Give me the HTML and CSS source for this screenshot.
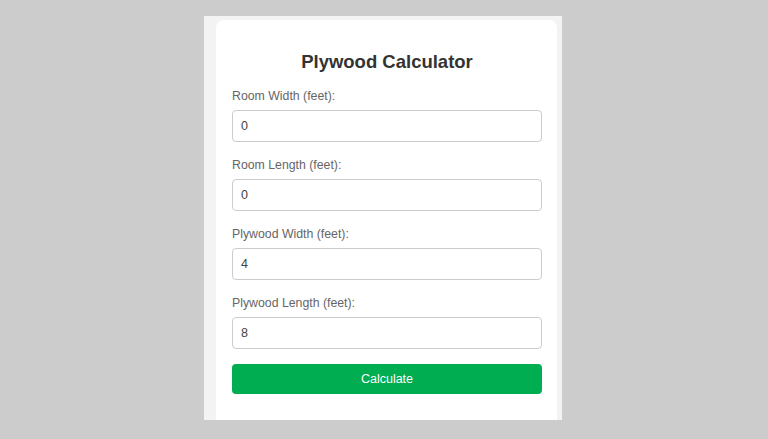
FILE: index.html
```html
<!DOCTYPE html>
<html lang="en">

<head>
    <meta charset="UTF-8">
    <meta name="viewport" content="width=device-width, initial-scale=1.0">
    <title>Plywood Calculator</title>
    <link rel="stylesheet" href="styles.css">
</head>

<body>
    <div class="frame">
        <div class="container">
            <h2>Plywood Calculator</h2>
            <div class="field">
                <label for="room-width">Room Width (feet):</label>
                <input type="number" id="room-width" value="0">
            </div>
            <div class="field">
                <label for="room-length">Room Length (feet):</label>
                <input type="number" id="room-length" value="0">
            </div>
            <div class="field">
                <label for="ply-width">Plywood Width (feet):</label>
                <input type="number" id="ply-width" value="4">
            </div>
            <div class="field">
                <label for="ply-length">Plywood Length (feet):</label>
                <input type="number" id="ply-length" value="8">
            </div>
            <button type="button" class="calc-btn">Calculate</button>
        </div>
    </div>
</body>

</html>
```

FILE: styles.css
```css
body {
    font-family: 'Liberation Sans', Arial, sans-serif;
    background-color: #cccccc;
    margin: 0;
}

.frame {
    width: 358px;
    height: 404px;
    margin: 16px auto 0;
    position: relative;
    left: -1px;
    box-sizing: border-box;
    padding: 4px 5px 0 12px;
    background-color: #f3f3f3;
    overflow: hidden;
}

.container {
    background-color: #ffffff;
    border-radius: 8px 8px 0 0;
    padding: 20px 15px 26px 16px;
    height: 100%;
    box-sizing: border-box;
}

h2 {
    color: #333;
    font-size: 18.5px;
    line-height: 24px;
    text-align: center;
    margin: 10px 0 14px;
}

.field {
    display: flex;
    flex-direction: column;
    gap: 6px;
    margin-bottom: 15px;
}

.field label {
    color: #666;
    font-size: 12.3px;
    line-height: 16px;
}

.field input {
    height: 32px;
    box-sizing: border-box;
    padding: 0 8px;
    border: 1px solid #ccc;
    border-radius: 4px;
    font-family: inherit;
    font-size: 12.5px;
    color: #444;
    outline: none;
    -moz-appearance: textfield;
}

.field input::-webkit-inner-spin-button,
.field input::-webkit-outer-spin-button {
    -webkit-appearance: none;
    margin: 0;
}

.calc-btn {
    display: block;
    width: 100%;
    height: 30px;
    border: none;
    border-radius: 4px;
    background-color: #00ad50;
    color: #ffffff;
    font-family: inherit;
    font-size: 12.5px;
    cursor: pointer;
}
```
